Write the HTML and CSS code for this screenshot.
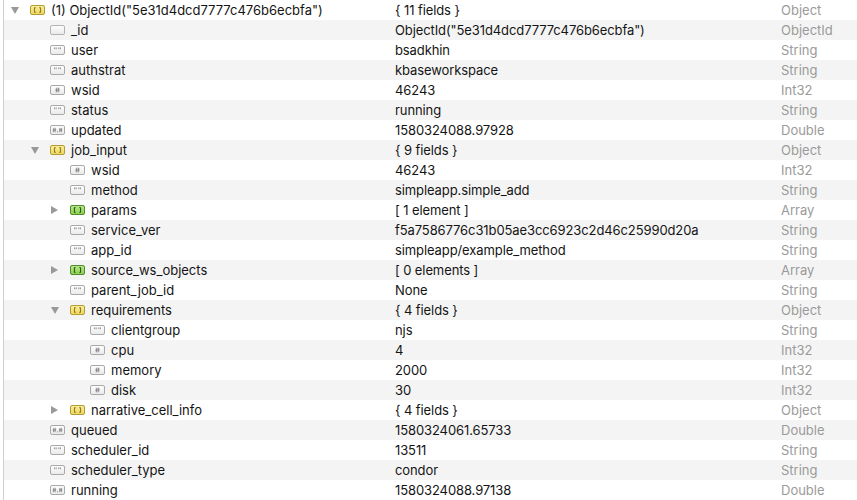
FILE: index.html
```html
<!DOCTYPE html>
<html>
<head>
<meta charset="utf-8">
<link rel="stylesheet" href="styles.css">
</head>
<body>
<svg width="0" height="0" class="defs">
  <defs>
    <linearGradient id="gobj" x1="0" y1="0" x2="0" y2="1"><stop offset="0" stop-color="#fbef9c"/><stop offset="1" stop-color="#eed65a"/></linearGradient>
    <linearGradient id="garr" x1="0" y1="0" x2="0" y2="1"><stop offset="0" stop-color="#b9e88a"/><stop offset="1" stop-color="#8ccf52"/></linearGradient>
    <linearGradient id="gval" x1="0" y1="0" x2="0" y2="1"><stop offset="0" stop-color="#ffffff"/><stop offset="1" stop-color="#e9e9e9"/></linearGradient>
    <symbol id="i-obj" viewBox="0 0 15 10">
      <rect x="0.5" y="0.5" width="14" height="9" rx="1.5" fill="url(#gobj)" stroke="#b49c35"/>
      <path d="M5.6 2.6 L4.6 2.6 L4.6 4.4 L3.9 5 L4.6 5.6 L4.6 7.4 L5.6 7.4 M9.4 2.6 L10.4 2.6 L10.4 4.4 L11.1 5 L10.4 5.6 L10.4 7.4 L9.4 7.4" fill="none" stroke="#6b5a12" stroke-width="0.9"/>
    </symbol>
    <symbol id="i-arr" viewBox="0 0 15 10">
      <rect x="0.5" y="0.5" width="14" height="9" rx="1.5" fill="url(#garr)" stroke="#4f8c2a"/>
      <path d="M5.6 2.6 L4.4 2.6 L4.4 7.4 L5.6 7.4 M9.4 2.6 L10.6 2.6 L10.6 7.4 L9.4 7.4" fill="none" stroke="#24500c" stroke-width="1"/>
    </symbol>
    <symbol id="i-str" viewBox="0 0 15 10">
      <rect x="0.5" y="0.5" width="14" height="9" rx="1.5" fill="url(#gval)" stroke="#a9a9a9"/>
      <path d="M4.6 2.4 V4.2 M6.2 2.4 V4.2 M8.8 2.4 V4.2 M10.4 2.4 V4.2" stroke="#777" stroke-width="0.8"/>
    </symbol>
    <symbol id="i-int" viewBox="0 0 15 10">
      <rect x="0.5" y="0.5" width="14" height="9" rx="1.5" fill="url(#gval)" stroke="#a9a9a9"/>
      <path d="M6.8 2.6 L6.4 7.4 M8.6 2.6 L8.2 7.4 M5.4 4.2 H9.8 M5.2 5.8 H9.6" stroke="#777" stroke-width="0.7"/>
    </symbol>
    <symbol id="i-dbl" viewBox="0 0 15 10">
      <rect x="0.5" y="0.5" width="14" height="9" rx="1.5" fill="url(#gval)" stroke="#a9a9a9"/>
      <path d="M3.8 2.8 L3.5 7.2 M5.3 2.8 L5 7.2 M2.8 4.3 H6.2 M2.7 5.7 H6.1 M10 2.8 L9.7 7.2 M11.5 2.8 L11.2 7.2 M9 4.3 H12.4 M8.9 5.7 H12.3" stroke="#777" stroke-width="0.65"/>
      <rect x="7.1" y="6.4" width="0.9" height="0.9" fill="#777"/>
    </symbol>
    <symbol id="i-oid" viewBox="0 0 15 10">
      <rect x="0.5" y="0.5" width="14" height="9" rx="1.5" fill="url(#gval)" stroke="#b3b3b3"/>
    </symbol>
  </defs>
</svg>
<div class="tree">
  <div class="row l0"><div class="name"><span class="tw open"></span><svg class="ic"><use href="#i-obj"/></svg><span class="key">(1) ObjectId("5e31d4dcd7777c476b6ecbfa")</span></div><div class="val">{ 11 fields }</div><div class="type">Object</div></div>
  <div class="row l1"><div class="name"><span class="tw"></span><svg class="ic"><use href="#i-oid"/></svg><span class="key">_id</span></div><div class="val">ObjectId("5e31d4dcd7777c476b6ecbfa")</div><div class="type">ObjectId</div></div>
  <div class="row l1"><div class="name"><span class="tw"></span><svg class="ic"><use href="#i-str"/></svg><span class="key">user</span></div><div class="val">bsadkhin</div><div class="type">String</div></div>
  <div class="row l1"><div class="name"><span class="tw"></span><svg class="ic"><use href="#i-str"/></svg><span class="key">authstrat</span></div><div class="val">kbaseworkspace</div><div class="type">String</div></div>
  <div class="row l1"><div class="name"><span class="tw"></span><svg class="ic"><use href="#i-int"/></svg><span class="key">wsid</span></div><div class="val">46243</div><div class="type">Int32</div></div>
  <div class="row l1"><div class="name"><span class="tw"></span><svg class="ic"><use href="#i-str"/></svg><span class="key">status</span></div><div class="val">running</div><div class="type">String</div></div>
  <div class="row l1"><div class="name"><span class="tw"></span><svg class="ic"><use href="#i-dbl"/></svg><span class="key">updated</span></div><div class="val">1580324088.97928</div><div class="type">Double</div></div>
  <div class="row l1"><div class="name"><span class="tw open"></span><svg class="ic"><use href="#i-obj"/></svg><span class="key">job_input</span></div><div class="val">{ 9 fields }</div><div class="type">Object</div></div>
  <div class="row l2"><div class="name"><span class="tw"></span><svg class="ic"><use href="#i-int"/></svg><span class="key">wsid</span></div><div class="val">46243</div><div class="type">Int32</div></div>
  <div class="row l2"><div class="name"><span class="tw"></span><svg class="ic"><use href="#i-str"/></svg><span class="key">method</span></div><div class="val">simpleapp.simple_add</div><div class="type">String</div></div>
  <div class="row l2"><div class="name"><span class="tw closed"></span><svg class="ic"><use href="#i-arr"/></svg><span class="key">params</span></div><div class="val">[ 1 element ]</div><div class="type">Array</div></div>
  <div class="row l2"><div class="name"><span class="tw"></span><svg class="ic"><use href="#i-str"/></svg><span class="key">service_ver</span></div><div class="val">f5a7586776c31b05ae3cc6923c2d46c25990d20a</div><div class="type">String</div></div>
  <div class="row l2"><div class="name"><span class="tw"></span><svg class="ic"><use href="#i-str"/></svg><span class="key">app_id</span></div><div class="val">simpleapp/example_method</div><div class="type">String</div></div>
  <div class="row l2"><div class="name"><span class="tw closed"></span><svg class="ic"><use href="#i-arr"/></svg><span class="key">source_ws_objects</span></div><div class="val">[ 0 elements ]</div><div class="type">Array</div></div>
  <div class="row l2"><div class="name"><span class="tw"></span><svg class="ic"><use href="#i-str"/></svg><span class="key">parent_job_id</span></div><div class="val">None</div><div class="type">String</div></div>
  <div class="row l2"><div class="name"><span class="tw open"></span><svg class="ic"><use href="#i-obj"/></svg><span class="key">requirements</span></div><div class="val">{ 4 fields }</div><div class="type">Object</div></div>
  <div class="row l3"><div class="name"><span class="tw"></span><svg class="ic"><use href="#i-str"/></svg><span class="key">clientgroup</span></div><div class="val">njs</div><div class="type">String</div></div>
  <div class="row l3"><div class="name"><span class="tw"></span><svg class="ic"><use href="#i-int"/></svg><span class="key">cpu</span></div><div class="val">4</div><div class="type">Int32</div></div>
  <div class="row l3"><div class="name"><span class="tw"></span><svg class="ic"><use href="#i-int"/></svg><span class="key">memory</span></div><div class="val">2000</div><div class="type">Int32</div></div>
  <div class="row l3"><div class="name"><span class="tw"></span><svg class="ic"><use href="#i-int"/></svg><span class="key">disk</span></div><div class="val">30</div><div class="type">Int32</div></div>
  <div class="row l2"><div class="name"><span class="tw closed"></span><svg class="ic"><use href="#i-obj"/></svg><span class="key">narrative_cell_info</span></div><div class="val">{ 4 fields }</div><div class="type">Object</div></div>
  <div class="row l1"><div class="name"><span class="tw"></span><svg class="ic"><use href="#i-dbl"/></svg><span class="key">queued</span></div><div class="val">1580324061.65733</div><div class="type">Double</div></div>
  <div class="row l1"><div class="name"><span class="tw"></span><svg class="ic"><use href="#i-str"/></svg><span class="key">scheduler_id</span></div><div class="val">13511</div><div class="type">String</div></div>
  <div class="row l1"><div class="name"><span class="tw"></span><svg class="ic"><use href="#i-str"/></svg><span class="key">scheduler_type</span></div><div class="val">condor</div><div class="type">String</div></div>
  <div class="row l1"><div class="name"><span class="tw"></span><svg class="ic"><use href="#i-dbl"/></svg><span class="key">running</span></div><div class="val">1580324088.97138</div><div class="type">Double</div></div>
</div>
</body>
</html>
```
FILE: styles.css
```css
html, body {
  margin: 0;
  padding: 0;
  background: #ffffff;
}
.defs {
  position: absolute;
  width: 0;
  height: 0;
  overflow: hidden;
}
.tree {
  margin-left: 3px;
  border-left: 1px solid #cfcfcf;
  font-family: Inter, "Liberation Sans", sans-serif;
  font-size: 13px;
  color: #141414;
  height: 500px;
  overflow: hidden;
}
.row {
  display: flex;
  align-items: center;
  height: 20px;
  line-height: 20px;
  white-space: nowrap;
}
.row:nth-child(even) {
  background: #f4f4f4;
}
.name {
  width: 391px;
  display: flex;
  align-items: center;
  box-sizing: border-box;
}
.l0 .name { padding-left: 6px; }
.l1 .name { padding-left: 26px; }
.l2 .name { padding-left: 46px; }
.l3 .name { padding-left: 66px; }
.key {
  margin-left: -1px;
}
.tw {
  width: 20px;
  height: 20px;
  flex: none;
  position: relative;
}
.tw.open::before {
  content: "";
  position: absolute;
  left: 1px;
  top: 7px;
  border-left: 4px solid transparent;
  border-right: 4px solid transparent;
  border-top: 7px solid #999999;
}
.tw.closed::before {
  content: "";
  position: absolute;
  left: 1px;
  top: 6px;
  border-top: 4px solid transparent;
  border-bottom: 4px solid transparent;
  border-left: 7px solid #999999;
}
.ic {
  width: 15px;
  height: 10px;
  flex: none;
  margin-right: 7px;
}
.val {
  width: 386px;
  flex: none;
  letter-spacing: -0.1px;
}
.type {
  color: #9a9a9a;
  flex: none;
}
```
